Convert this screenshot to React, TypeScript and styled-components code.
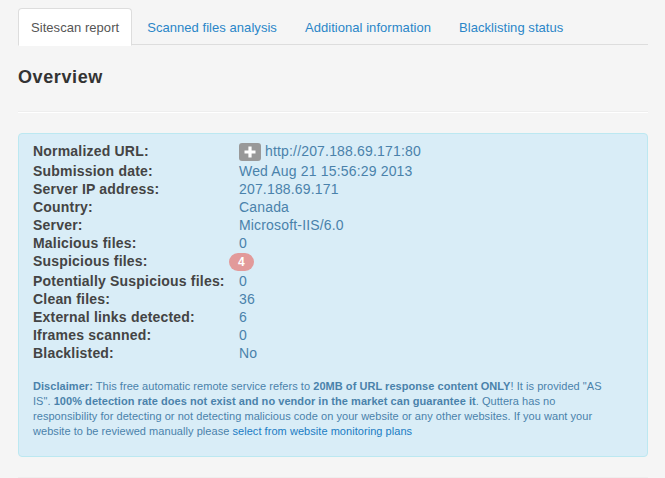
import React from 'react';
import styled, { createGlobalStyle } from 'styled-components';

const GlobalStyle = createGlobalStyle`
  html, body {
    margin: 0;
    height: 100%;
    overflow: hidden;
    background: #f5f5f5;
  }
  body {
    font-family: "Liberation Sans", Arial, sans-serif;
    font-size: 14px;
    line-height: 18px;
    color: #333;
  }
`;

const TABS = ['Sitescan report', 'Scanned files analysis', 'Additional information', 'Blacklisting status'];

type Row = { label: string; value?: string; kind?: 'url' | 'badge' };

const ROWS: Row[] = [
  { label: 'Normalized URL:', value: 'http://207.188.69.171:80', kind: 'url' },
  { label: 'Submission date:', value: 'Wed Aug 21 15:56:29 2013' },
  { label: 'Server IP address:', value: '207.188.69.171' },
  { label: 'Country:', value: 'Canada' },
  { label: 'Server:', value: 'Microsoft-IIS/6.0' },
  { label: 'Malicious files:', value: '0' },
  { label: 'Suspicious files:', value: '4', kind: 'badge' },
  { label: 'Potentially Suspicious files:', value: '0' },
  { label: 'Clean files:', value: '36' },
  { label: 'External links detected:', value: '6' },
  { label: 'Iframes scanned:', value: '0' },
  { label: 'Blacklisted:', value: 'No' },
];

const App: React.FC = () => {
  return (
    <Page>
      <GlobalStyle />
      <TabBar>
        {TABS.map((tab, idx) => (
          <Tab key={tab} active={idx === 0}>
            {tab}
          </Tab>
        ))}
      </TabBar>
      <Title>Overview</Title>
      <Rule space={24} />
      <Alert>
        <InfoTable>
          <tbody>
            {ROWS.map((row) => (
              <tr key={row.label}>
                <Label>{row.label}</Label>
                <Value>
                  {row.kind === 'url' && (
                    <PlusButton>
                      <svg width="12" height="12" viewBox="0 0 12 12">
                        <path d="M4.4 0.5h3.2v3.9h3.9v3.2H7.6v3.9H4.4V7.6H0.5V4.4h3.9z" fill="#fff" />
                      </svg>
                    </PlusButton>
                  )}
                  {row.kind === 'badge' ? <Badge>{row.value}</Badge> : row.value}
                </Value>
              </tr>
            ))}
          </tbody>
        </InfoTable>
        <Disclaimer>
          <strong>Disclaimer:</strong> This free automatic remote service refers to{' '}
          <strong>20MB of URL response content ONLY</strong>! It is provided "AS IS".{' '}
          <strong>100% detection rate does not exist and no vendor in the market can guarantee it</strong>. Quttera has
          no responsibility for detecting or not detecting malicious code on your website or any other websites. If you
          want your website to be reviewed manually please <PlanLink>select from website monitoring plans</PlanLink>
        </Disclaimer>
      </Alert>
      <Rule space={20} />
    </Page>
  );
};

export default App;

const Page = styled.div`
  padding: 8px 17px 0 18px;
`;

const TabBar = styled.div`
  display: flex;
  height: 37px;
  box-sizing: border-box;
  border-bottom: 1px solid #ddd;
`;

const Tab = styled.div<{ active: boolean }>`
  box-sizing: border-box;
  height: 38px;
  margin-right: 2px;
  padding: 10px 12px;
  border: 1px solid ${({ active }) => (active ? '#ddd' : 'transparent')};
  border-bottom-color: ${({ active }) => (active ? '#fff' : 'transparent')};
  border-radius: 4px 4px 0 0;
  background: ${({ active }) => (active ? '#fff' : 'transparent')};
  color: ${({ active }) => (active ? '#555' : '#2a86c8')};
  font-size: 13px;
  letter-spacing: 0.05px;
`;

const Title = styled.h3`
  margin: 22px 0 0;
  font-size: 18px;
  line-height: 20px;
  font-weight: bold;
  letter-spacing: 0.6px;
  color: #333;
`;

const Rule = styled.div<{ space: number }>`
  margin-top: ${({ space }) => space}px;
  height: 0;
  border-top: 1px solid #eee;
  border-bottom: 1px solid #fff;
`;

const Alert = styled.div`
  box-sizing: border-box;
  height: 324px;
  margin-top: 20px;
  padding: 8px 15px 0 14px;
  background: #d9edf7;
  border: 1px solid #bce8f1;
  border-radius: 4px;
  color: #31708f;
`;

const InfoTable = styled.table`
  border-collapse: collapse;
  border-spacing: 0;
`;

const Label = styled.td`
  width: 206px;
  padding: 0;
  font-weight: bold;
  letter-spacing: 0.2px;
  color: #444;
  white-space: nowrap;
  vertical-align: top;
`;

const Value = styled.td`
  padding: 0;
  color: #4a82ab;
  letter-spacing: 0.17px;
  white-space: nowrap;
  vertical-align: top;
`;

const PlusButton = styled.span`
  display: inline-flex;
  align-items: center;
  justify-content: center;
  width: 22px;
  height: 18px;
  margin: 1px 4px 1px 0;
  vertical-align: top;
  background: #999;
  border-radius: 3px;
`;

const Badge = styled.span`
  display: inline-block;
  box-sizing: border-box;
  width: 25px;
  height: 18px;
  margin: 1px 0 1px -10px;
  background: #e29a9a;
  border-radius: 9px;
  color: #fff;
  font-size: 12px;
  font-weight: bold;
  line-height: 18px;
  text-align: center;
  vertical-align: top;
`;

const Disclaimer = styled.p`
  width: 576px;
  margin: 17px 0 0;
  font-size: 11px;
  line-height: 15px;
  letter-spacing: 0.05px;
  color: #4a82ab;
`;

const PlanLink = styled.span`
  color: #1a7cc4;
`;
